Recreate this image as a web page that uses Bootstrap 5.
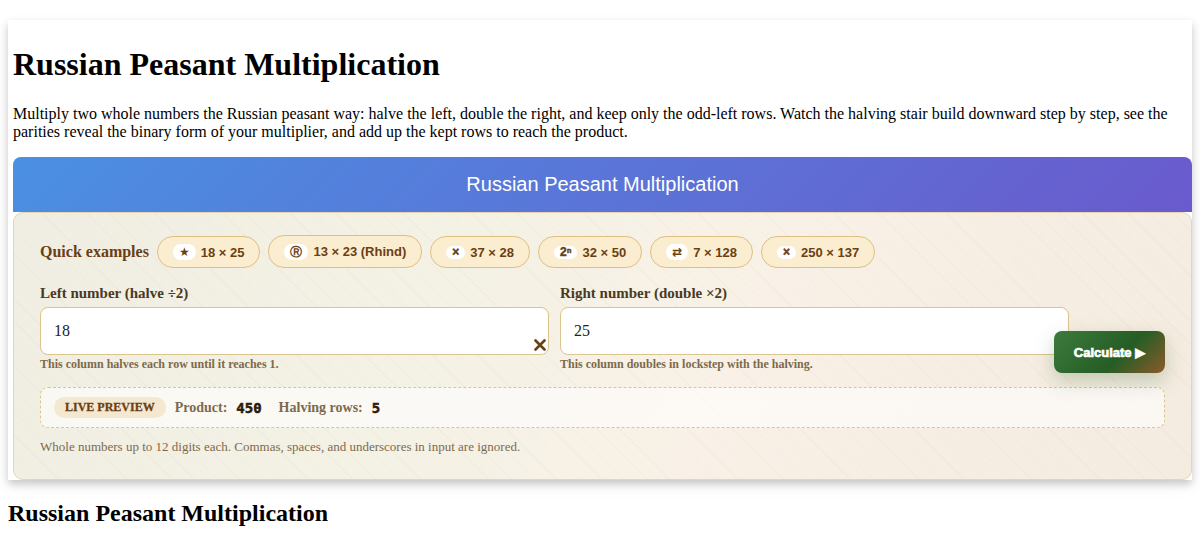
<!DOCTYPE html>
<html lang="en">
<head>
<meta charset="utf-8">
<meta name="viewport" content="width=device-width, initial-scale=1">
<title>Russian Peasant Multiplication</title>
<link href="https://cdn.jsdelivr.net/npm/bootstrap@5.3.0/dist/css/bootstrap.min.css" rel="stylesheet">
<style>
body{font-family:"Liberation Serif",serif;font-size:16px;line-height:18px;color:#000;background:#fff}
.sheet{margin:20px 8px 0;padding:24px 0 0 5px;box-shadow:0 4px 8px rgba(0,0,0,.2),0 6px 20px rgba(0,0,0,.04)}
.sheet h1{font-size:32px;line-height:40px;font-weight:700;margin:0 0 21px}
.sheet .intro{margin:0 0 16px}
.banner{height:55px;border-radius:8px 8px 0 0;background:linear-gradient(135deg,#4a90e2,#6a5acd);color:#fff;font:20px/55px "Liberation Sans",sans-serif}
.calc{border:1px solid #e6d5b0;border-radius:10px;padding:22px 26px 23px;
background:repeating-linear-gradient(45deg,transparent 0 15px,rgba(139,90,43,.03) 15px 16px),linear-gradient(115deg,#f0eee2 0%,#f4f1e5 35%,#f9f1e7 60%,#f6eee2 78%,#f4ece0 100%)}
.chips-title{font-weight:700;color:#6b3f14;line-height:33px}
.chip{display:flex;align-items:center;gap:5px;height:32px;padding:0 15px;border:1px solid #dfc084;border-radius:16px;background:#fbedd0;color:#6b3f14;font:700 13px/15px "Liberation Sans",sans-serif}
.chip-tall{height:33px}
.glyph{background:#fff;border-radius:8px;padding:0 6px;font-size:12px;line-height:16px;height:16px;font-family:"Liberation Sans","DejaVu Sans",sans-serif}
.glyph-sm{font-size:12px;line-height:13px;height:13px;-webkit-text-stroke:.5px #6b3f14}
.fields{gap:11px;margin-top:16px}
.field{flex:1 1 0;min-width:0}
.fields label{font-size:15px;font-weight:700;color:#4a3a22;line-height:18px;margin-bottom:5px}
.fields .form-control{height:48px;border:1px solid #dcc48e;border-radius:8px;padding:0 14px 0 13px;font-size:16px;color:#2a2018;background:#fff}
.hint{font-size:12px;line-height:17px;font-weight:700;color:#7d6a4d;margin-top:1px}
.clear-x{position:absolute;right:3px;bottom:22px;width:12px;height:12px;padding:0;border:0;background:none;line-height:0}
.go{width:111px;height:42px;margin-left:-26px;border:0;border-radius:8px;color:#fff;font:700 13px/15px "Liberation Sans","DejaVu Sans",sans-serif;background:linear-gradient(135deg,#3d7a3d 0%,#255d25 60%,#8b5a2b 100%);box-shadow:0 8px 20px rgba(45,90,45,.25);-webkit-text-stroke:.7px #fff;z-index:1}
.preview{gap:9px;margin-top:14px;height:41px;padding:0 13px;border:1px dashed #dcc48e;border-radius:8px;background:rgba(255,255,255,.6);font-size:14px;font-weight:700;color:#7d6a4d}
.live{background:#f5e8d0;color:#6b3f14;border-radius:11px;padding:0 11px;font-size:12px;line-height:21px;-webkit-text-stroke:.3px #6b3f14}
.val{font:700 14px/18px "DejaVu Sans Mono",monospace;color:#2a1c0c;-webkit-text-stroke:.5px #2a1c0c}
.note{font-size:13px;line-height:18px;color:#7d6a4d;margin:10px 0 0}
.next-title{font-size:24px;line-height:28px;font-weight:700;margin:19px 8px 0}
</style>
</head>
<body>
<main class="sheet">
  <h1>Russian Peasant Multiplication</h1>
  <p class="intro">Multiply two whole numbers the Russian peasant way: halve the left, double the right, and keep only the odd-left rows. Watch the halving stair build downward step by step, see the parities reveal the binary form of your multiplier, and add up the kept rows to reach the product.</p>
  <div class="banner text-center">Russian Peasant Multiplication</div>
  <form class="calc">
    <div class="d-flex flex-wrap align-items-end gap-2">
      <span class="chips-title">Quick examples</span>
      <button type="button" class="chip"><span class="glyph">★</span>18 × 25</button>
      <button type="button" class="chip chip-tall"><span class="glyph">Ⓡ</span>13 × 23 (Rhind)</button>
      <button type="button" class="chip"><span class="glyph glyph-sm">×</span>37 × 28</button>
      <button type="button" class="chip"><span class="glyph glyph-sm">2ⁿ</span>32 × 50</button>
      <button type="button" class="chip"><span class="glyph">⇄</span>7 × 128</button>
      <button type="button" class="chip"><span class="glyph glyph-sm">×</span>250 × 137</button>
    </div>
    <div class="fields d-flex align-items-end">
      <div class="field position-relative">
        <label class="d-block" for="left">Left number (halve ÷2)</label>
        <input class="form-control" id="left" type="text" value="18" aria-describedby="lh">
        <div class="hint" id="lh">This column halves each row until it reaches 1.</div>
        <button type="button" class="clear-x" aria-label="Clear"><svg width="12" height="12" viewBox="0 0 12 12"><path d="M1.5 1.5 10.5 10.5M10.5 1.5 1.5 10.5" stroke="#6b3f14" stroke-width="2.6" stroke-linecap="round"/></svg></button>
      </div>
      <div class="field">
        <label class="d-block" for="right">Right number (double ×2)</label>
        <input class="form-control" id="right" type="text" value="25" aria-describedby="rh">
        <div class="hint" id="rh">This column doubles in lockstep with the halving.</div>
      </div>
      <button type="button" class="go flex-shrink-0">Calculate ▶</button>
    </div>
    <div class="preview d-flex align-items-center">
      <span class="live">LIVE PREVIEW</span>
      <span>Product:</span><span class="val me-2">450</span>
      <span>Halving rows:</span><span class="val">5</span>
    </div>
    <p class="note">Whole numbers up to 12 digits each. Commas, spaces, and underscores in input are ignored.</p>
  </form>
</main>
<h2 class="next-title">Russian Peasant Multiplication</h2>
<script src="https://cdn.jsdelivr.net/npm/bootstrap@5.3.0/dist/js/bootstrap.bundle.min.js"></script>
</body>
</html>
